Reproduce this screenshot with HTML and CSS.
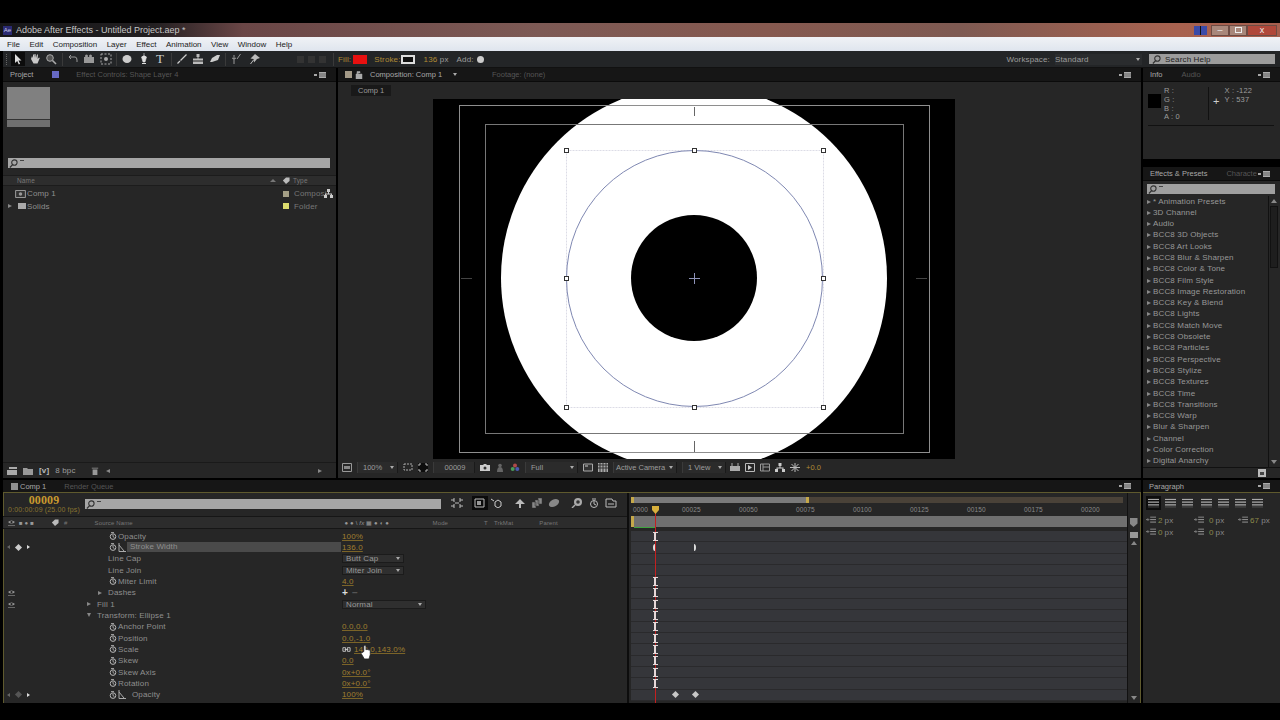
FILE: index.html
```html
<!DOCTYPE html>
<html lang="en">
<head>
  <meta charset="UTF-8">
  <title>Adobe After Effects</title>
  <link rel="stylesheet" href="styles.css">
</head>
<body>
  <!-- shared icons -->
  <svg class="defs">
    <symbol id="i-watch" viewBox="0 0 8 8"><circle cx="4" cy="4.600" r="2.800" fill="none" stroke="#b5b5b5"/><path d="M2 .6h3M4 2.600v2l1.500 1" fill="none" stroke="#b5b5b5" stroke-width=".9"/></symbol>
    <symbol id="i-eye" viewBox="0 0 10 8"><path d="M1 3.500Q5 0 9 3.500 5 7 1 3.500z" fill="#999"/><circle cx="5" cy="3.500" r="1.300" fill="#222"/><path d="M1 7.500h8" stroke="#777"/></symbol>
    <symbol id="i-graph" viewBox="0 0 8 9"><path d="M1 0v8.500h7M1 2l5 6" fill="none" stroke="#aaa"/></symbol>
    <symbol id="i-lens" viewBox="0 0 10 10"><circle cx="6" cy="4" r="3" fill="none" stroke="#333" stroke-width="1.200"/><path d="M4 6.200 1 9.400" stroke="#333" stroke-width="1.400"/></symbol>
    <symbol id="i-menu" viewBox="0 0 12 6"><path d="M0 2.200h3v1.600H0z" fill="#ccc"/><path d="M5 0h7v6H5z" fill="#aaa"/><path d="M5 2h7M5 4h7" stroke="#333" stroke-width=".6"/></symbol>
    <symbol id="i-lines" viewBox="0 0 12 10"><path d="M0 1h12M0 4h12M0 7h12" stroke="#aaa" stroke-width="1.400" fill="none"/><path d="M0 9.500h12" stroke="#666"/></symbol>
    <symbol id="i-indent" viewBox="0 0 12 9"><path d="M5 1h7M5 4h7M5 7h7" stroke="#aaa" fill="none"/><path d="M0 4h3M2 2.500 3.500 4 2 5.500" stroke="#aaa" fill="none" stroke-width=".8"/></symbol>
  </svg>

  <div class="titlebar">
    <span class="app-logo">Ae</span>
    <span class="app-title">Adobe After Effects - Untitled Project.aep *</span>
    <span class="win-flag"></span>
    <span class="win-btn">&#8211;</span>
    <span class="win-btn"><span class="win-max"></span></span>
    <span class="win-btn win-close">x</span>
  </div>

  <nav class="menubar">
    <span>File</span><span>Edit</span><span>Composition</span><span>Layer</span><span>Effect</span>
    <span>Animation</span><span>View</span><span>Window</span><span>Help</span>
  </nav>

  <div class="toolbar">
    <span class="grip"></span>
    <svg class="tool tool-on" viewBox="0 0 12 12"><path d="M3 1v9l2.200-2 1.600 3.400 1.300-.6-1.600-3.200h3z" fill="#ddd"/></svg>
    <svg class="tool" viewBox="0 0 12 12"><path d="M2 6 3 3l1 2V1.500h1V5l.5-4h1L7 5l1-3.400h1L8.600 6 10 4.500l.8.6L8.500 10.500h-4z" fill="#c8c8c8"/></svg>
    <svg class="tool" viewBox="0 0 12 12"><circle cx="5" cy="5" r="3.300" fill="#555" stroke="#aaa"/><path d="m7.500 7.500 3.500 3.500" stroke="#aaa" stroke-width="1.600"/></svg>
    <span class="tb-sep"></span>
    <svg class="tool" viewBox="0 0 12 12"><path d="M2 4h6q2 0 2 3v2" fill="none" stroke="#999"/><path d="M4 2 2 4l2 2" fill="none" stroke="#999"/></svg>
    <svg class="tool" viewBox="0 0 12 12"><path d="M1 4h10v6H1z" fill="#999"/><circle cx="3.500" cy="3" r="1.500" fill="#999"/><circle cx="7.500" cy="3" r="1.500" fill="#999"/></svg>
    <svg class="tool" viewBox="0 0 12 12"><path d="M1 1h10v10H1z" fill="none" stroke="#aaa" stroke-dasharray="2 1.500"/><circle cx="6" cy="6" r="2" fill="#aaa"/></svg>
    <span class="tb-sep"></span>
    <svg class="tool" viewBox="0 0 12 12"><ellipse cx="6" cy="6" rx="4.500" ry="4" fill="#ccc"/></svg>
    <svg class="tool" viewBox="0 0 12 12"><path d="M6 0v3M3.500 4Q6 1.500 8.500 4L7 9H5z" fill="#ddd" stroke="#ddd" stroke-width=".6"/><path d="M4 10.500h4" stroke="#ddd"/></svg>
    <span class="tool-t">T</span>
    <span class="tb-sep"></span>
    <svg class="tool" viewBox="0 0 12 12"><path d="m10.500 1.500-6 6M4 8 1.500 10.500" stroke="#ccc" stroke-width="1.300"/></svg>
    <svg class="tool" viewBox="0 0 12 12"><path d="M4.500 1h3v3h-1v1.500H11V11H1V5.500h4.500V4h-1z" fill="#bbb"/><path d="M1 8h10" stroke="#222"/></svg>
    <svg class="tool" viewBox="0 0 12 12"><path d="M3 5 8 2h3L9 7 3 9H1z" fill="#ccc"/></svg>
    <span class="tb-sep"></span>
    <svg class="tool" viewBox="0 0 12 12"><path d="M4 2v9M2 5l2 1 2-1M10.500 1 7 6" stroke="#999" fill="none"/></svg>
    <svg class="tool tool-pin" viewBox="0 0 12 12"><path d="M6 1 11 5 8 6 5 9.500 4.500 6 1.500 5.500z" fill="#bbb"/><path d="M4.500 7 1.500 11" stroke="#bbb"/></svg>
    <span class="axis"></span><span class="axis"></span><span class="axis"></span>
    <span class="tb-sep tb-sep-axis"></span>
    <span class="gold fill-lbl">Fill:</span><span class="swatch-fill"></span>
    <span class="gold stroke-lbl">Stroke:</span><span class="swatch-stroke"></span>
    <span class="stroke-px"><span class="gold">136</span> px</span>
    <span class="add-lbl">Add:</span><span class="add-dot"></span>
    <span class="workspace-lbl">Workspace:</span>
    <span class="workspace">Standard<span class="arrow"></span></span>
    <span class="help"><svg class="lens" viewBox="0 0 10 10"><use href="#i-lens"/></svg>Search Help</span>
  </div>

  <div class="upper">
    <section class="panel project">
      <div class="tabs">
        <span class="tab tab-on">Project</span>
        <span class="tab-chip"></span>
        <span class="tab tab-dim effect-tab">Effect Controls: Shape Layer 4</span>
        <svg class="panel-menu" viewBox="0 0 12 6"><use href="#i-menu"/></svg>
      </div>
      <div class="thumb"><div class="thumb-strip"></div></div>
      <div class="search project-search"><svg class="lens" viewBox="0 0 10 10"><use href="#i-lens"/></svg><span class="caret"></span></div>
      <div class="col-head">
        <span>Name</span>
        <span class="sort"></span>
        <svg class="tag" viewBox="0 0 9 9"><path d="M1 4 4.500.500H8.500V4.500L4.500 8z" fill="#bbb"/></svg>
        <span>Type</span>
      </div>
      <ul class="files">
        <li><svg class="comp-ico" viewBox="0 0 12 9"><path d="M.5.500h11v8H.500z" fill="#333" stroke="#aaa"/><circle cx="6" cy="4.500" r="2" fill="#999"/></svg><span class="file-name">Comp 1</span><span class="lbl lbl-comp"></span><span class="file-type">Composi</span><svg class="flow" viewBox="0 0 9 9"><path d="M3 0h3v3H3zM0 6h3v3H0zM6 6h3v3H6zM4 3h1v1.500h3V6H7V5.500H2V6H1V4.500h3z" fill="#ccc"/></svg></li>
        <li><span class="tw"></span><span class="folder"></span><span class="file-name">Solids</span><span class="lbl lbl-folder"></span><span class="file-type">Folder</span></li>
      </ul>
      <div class="project-foot">
        <svg class="foot-ico" viewBox="0 0 10 8"><path d="M0 3h10v5H0z" fill="#aaa"/><path d="M2 0h8v2H2z" fill="#aaa"/></svg>
        <svg class="foot-ico" viewBox="0 0 10 8"><path d="M0 1h4l1 1h5v6H0z" fill="#999"/></svg>
        <span class="bracket">[v]</span>
        <span>8 bpc</span>
        <svg class="foot-ico trash" viewBox="0 0 8 10"><path d="M0 1h8v1H0zM1 3h6v7H1z" fill="#999"/></svg>
        <span class="tw tw-left"></span>
        <span class="tw foot-right"></span>
      </div>
    </section>

    <section class="panel comp">
      <div class="tabs">
        <span class="tab-chip tab-chip-tan"></span>
        <svg class="lock" viewBox="0 0 8 9"><path d="M1 4h6v5H1zM2 4V1.500h3V3" fill="#aaa" stroke="#aaa" stroke-width=".5"/></svg>
        <span class="tab tab-on comp-tab">Composition: Comp 1<span class="arrow comp-arrow"></span></span>
        <span class="tab tab-dim footage-tab">Footage: (none)</span>
        <svg class="panel-menu" viewBox="0 0 12 6"><use href="#i-menu"/></svg>
      </div>
      <div class="crumbs"><span class="crumb">Comp 1</span></div>
      <div class="viewer">
        <svg class="stage" viewBox="433 99 522 360">
          <rect x="433" y="99" width="522" height="360" fill="#000"/>
          <circle cx="694" cy="278" r="193" fill="#fff"/>
          <circle cx="694" cy="278" r="63" fill="#000"/>
          <g fill="none" stroke="#8e8e8e">
            <rect x="459.500" y="105.500" width="470" height="347"/>
            <rect x="485.500" y="124.500" width="418" height="309" stroke="#777"/>
            <path d="M694.500 107v9M694.500 441v11" stroke="#666"/>
            <path d="M461 278.500h11M916 278.500h11" stroke="#444"/>
          </g>
          <rect x="566.500" y="150.500" width="257" height="257" fill="none" stroke="#dcdce6" stroke-dasharray="2 1"/>
          <circle cx="694.500" cy="278.500" r="128" fill="none" stroke="#7f88b2"/>
          <g fill="#fff" stroke="#333">
            <rect x="564.500" y="148.500" width="4" height="4"/><rect x="692.500" y="148.500" width="4" height="4"/><rect x="821.500" y="148.500" width="4" height="4"/>
            <rect x="564.500" y="276.500" width="4" height="4"/><rect x="821.500" y="276.500" width="4" height="4"/>
            <rect x="564.500" y="405.500" width="4" height="4"/><rect x="692.500" y="405.500" width="4" height="4"/><rect x="821.500" y="405.500" width="4" height="4"/>
          </g>
          <path d="M689 278.500h11M694.500 273v11" stroke="#8e93b8"/>
        </svg>
      </div>
      <div class="comp-foot">
        <svg class="cf-ico" viewBox="0 0 10 9"><path d="M.5.500h9v8h-9z" fill="none" stroke="#999"/><path d="M2 3h6v3H2z" fill="#888"/></svg>
        <span class="cf-box cf-zoom">100%<span class="arrow"></span></span>
        <svg class="cf-ico" viewBox="0 0 10 9"><path d="M1 1h8v6H1z" fill="none" stroke="#aaa" stroke-dasharray="2 1"/></svg>
        <svg class="cf-ico cf-ico-dark" viewBox="0 0 10 9"><path d="M1 3V1h2M7 1h2v2M9 6v2H7M3 8H1V6" fill="none" stroke="#bbb"/></svg>
        <span class="cf-box cf-time">00009</span>
        <svg class="cf-ico" viewBox="0 0 10 9"><path d="M0 2h3l1-1h2l1 1h3v6H0z" fill="#ccc"/><circle cx="5" cy="5" r="1.500" fill="#333"/></svg>
        <svg class="cf-ico" viewBox="0 0 10 9"><circle cx="5" cy="2.500" r="1.800" fill="#666"/><path d="M2 9q0-5 3-5t3 5z" fill="#666"/></svg>
        <svg class="cf-ico" viewBox="0 0 10 9"><circle cx="5" cy="2.500" r="2" fill="#b04a4a"/><circle cx="2.700" cy="6" r="2" fill="#4a9a5a"/><circle cx="7.300" cy="6" r="2" fill="#4a5ab0"/></svg>
        <span class="cf-box cf-full">Full<span class="arrow"></span></span>
        <svg class="cf-ico" viewBox="0 0 10 9"><path d="M.5 1h9v7h-9z" fill="#333" stroke="#aaa"/><path d="M2 2.500h3v1H2z" fill="#ccc"/></svg>
        <svg class="cf-ico" viewBox="0 0 10 9"><path d="M0 0h10v9H0z" fill="#aaa"/><path d="M0 2h10M0 5h10M2 0v9M5 0v9M8 0v9" stroke="#333"/></svg>
        <span class="cf-box cf-cam">Active Camera<span class="arrow"></span></span>
        <span class="cf-box cf-view">1 View<span class="arrow"></span></span>
        <svg class="cf-ico cf-ico-first" viewBox="0 0 10 9"><path d="M0 3h10v5H0z" fill="#aaa"/><path d="M2 0v3M8 0v3" stroke="#aaa"/></svg>
        <svg class="cf-ico" viewBox="0 0 10 9"><path d="M.5.500h9v8h-9z" fill="none" stroke="#bbb"/><path d="m3 2 4 2.500L3 7z" fill="#ccc"/></svg>
        <svg class="cf-ico" viewBox="0 0 10 9"><path d="M.5 1h9v7h-9zM3 1v7M3 4h6" fill="none" stroke="#999"/></svg>
        <svg class="cf-ico" viewBox="0 0 10 9"><path d="M3.500 0h3v3h-3zM0 6h3v3H0zM7 6h3v3H7zM4.500 3h1v1.500h3V6h-1v-.5h-5V6h-1V4.500h3z" fill="#ccc"/></svg>
        <svg class="cf-ico" viewBox="0 0 10 9"><path d="M5 0v9M0 4.500h10M1.500 1l7 7M8.500 1l-7 7" stroke="#bbb"/></svg>
        <span class="gold cf-exposure">+0.0</span>
      </div>
    </section>

    <aside class="side">
      <section class="panel info">
        <div class="tabs">
          <span class="tab tab-on">Info</span>
          <span class="tab tab-dim audio-tab">Audio</span>
          <svg class="panel-menu" viewBox="0 0 12 6"><use href="#i-menu"/></svg>
        </div>
        <div class="info-body">
          <span class="info-swatch"></span>
          <div class="info-col">R :<br>G :<br>B :<br>A : 0</div>
          <div class="info-cross">+</div>
          <div class="info-xy">X : -122<br>Y : 537</div>
        </div>
      </section>
      <section class="panel effects">
        <div class="tabs">
          <span class="tab tab-on">Effects &amp; Presets</span>
          <span class="tab tab-dim char-tab">Characte</span>
          <svg class="panel-menu" viewBox="0 0 12 6"><use href="#i-menu"/></svg>
        </div>
        <div class="search fx-search"><svg class="lens" viewBox="0 0 10 10"><use href="#i-lens"/></svg><span class="caret"></span></div>
        <div class="fx-body">
          <ul class="fx-list">
            <li><span class="tw"></span>* Animation Presets</li>
            <li><span class="tw"></span>3D Channel</li>
            <li><span class="tw"></span>Audio</li>
            <li><span class="tw"></span>BCC8 3D Objects</li>
            <li><span class="tw"></span>BCC8 Art Looks</li>
            <li><span class="tw"></span>BCC8 Blur &amp; Sharpen</li>
            <li><span class="tw"></span>BCC8 Color &amp; Tone</li>
            <li><span class="tw"></span>BCC8 Film Style</li>
            <li><span class="tw"></span>BCC8 Image Restoration</li>
            <li><span class="tw"></span>BCC8 Key &amp; Blend</li>
            <li><span class="tw"></span>BCC8 Lights</li>
            <li><span class="tw"></span>BCC8 Match Move</li>
            <li><span class="tw"></span>BCC8 Obsolete</li>
            <li><span class="tw"></span>BCC8 Particles</li>
            <li><span class="tw"></span>BCC8 Perspective</li>
            <li><span class="tw"></span>BCC8 Stylize</li>
            <li><span class="tw"></span>BCC8 Textures</li>
            <li><span class="tw"></span>BCC8 Time</li>
            <li><span class="tw"></span>BCC8 Transitions</li>
            <li><span class="tw"></span>BCC8 Warp</li>
            <li><span class="tw"></span>Blur &amp; Sharpen</li>
            <li><span class="tw"></span>Channel</li>
            <li><span class="tw"></span>Color Correction</li>
            <li><span class="tw"></span>Digital Anarchy</li>
          </ul>
          <div class="vscroll"><span class="up"></span><span class="thumb-bar"></span><span class="down"></span></div>
        </div>
        <div class="fx-foot"><svg class="foot-ico" viewBox="0 0 8 8"><path d="M0 0h8v8H0z" fill="#bbb"/><path d="M2 3h4v3H2z" fill="#444"/></svg></div>
      </section>
    </aside>
  </div>

  <div class="lower">
    <section class="panel timeline">
      <div class="tabs tl-tabs">
        <span class="tab-chip tab-chip-gray"></span>
        <span class="tab tab-on">Comp 1</span>
        <span class="tab tab-dim rq-tab">Render Queue</span>
        <svg class="panel-menu" viewBox="0 0 12 6"><use href="#i-menu"/></svg>
      </div>
      <div class="tl-main">
        <div class="tl-left">
          <div class="tl-ctrl">
            <div class="timecode"><div class="tc-big">00009</div><div class="tc-small">0:00:00:09 (25.00 fps)</div></div>
            <div class="search tl-search"><svg class="lens" viewBox="0 0 10 10"><use href="#i-lens"/></svg><span class="caret"></span></div>
            <div class="tl-tools">
              <svg viewBox="0 0 12 10"><path d="M0 2h3M0 8h3M3 0v4M3 6v4M9 0v4M9 6v4M9 2h3M9 8h3M4 5h4" stroke="#bbb" fill="none"/></svg>
              <svg class="tl-tool-on" viewBox="0 0 12 10"><path d="M1 1h9v8H1z" fill="none" stroke="#bbb"/><path d="M3 3h4v4H3z" fill="#999"/></svg>
              <svg viewBox="0 0 12 10"><path d="M4 4l3-2 3 2v4l-3 2-3-2z" fill="none" stroke="#ccc"/><path d="M0 1l3 2" stroke="#ccc"/></svg>
              <svg class="tl-gap" viewBox="0 0 12 10"><path d="M1 6 6 1l5 5zM5 6h2v4H5zM1 8h10" fill="#bbb"/></svg>
              <svg viewBox="0 0 12 10"><path d="M1 4h4v6H1zM4 2h4v6H4zM7 0h4v6H7z" fill="#888" stroke="#333" stroke-width=".5"/></svg>
              <svg viewBox="0 0 12 10"><ellipse cx="6" cy="5" rx="5.500" ry="3.500" transform="rotate(-30 6 5)" fill="#888"/></svg>
              <svg class="tl-gap" viewBox="0 0 12 10"><circle cx="7" cy="4" r="4" fill="#aaa"/><circle cx="7" cy="4" r="1.800" fill="#333"/><path d="M4 7 1 10" stroke="#aaa" stroke-width="1.400"/></svg>
              <svg viewBox="0 0 12 10"><circle cx="6" cy="6" r="3.500" fill="none" stroke="#bbb"/><path d="M4 1h4M6 3v3l2 1" stroke="#bbb" fill="none"/></svg>
              <svg viewBox="0 0 12 10"><path d="M1 1h6l1 2h3v6H1z" fill="none" stroke="#bbb"/><path d="M3 6h6" stroke="#bbb"/></svg>
            </div>
          </div>
          <div class="tl-head">
            <span class="sw-ico"><svg viewBox="0 0 10 8"><use href="#i-eye"/></svg></span>
            <span class="head-sw">&#9632;&#9679;&#9632;</span>
            <svg class="tag" viewBox="0 0 9 9"><path d="M1 4 4.500.500H8.500V4.500L4.500 8z" fill="#bbb"/></svg>
            <span class="hash">#</span>
            <span class="src">Source Name</span>
            <span class="layer-sw">&#9679; &#9679; &#92; <i>fx</i> &#9638; &#9679; &#9680; &#9679;</span>
            <span class="h-mode">Mode</span><span class="h-t">T</span><span class="h-trk">TrkMat</span><span class="h-parent">Parent</span>
          </div>
          <div class="tl-rows">
            <div class="row"><span class="sw"></span><span class="nm nm-prop"><svg class="watch"><use href="#i-watch"/></svg>Opacity</span><span class="val"><u>100%</u></span></div>
            <div class="row"><span class="sw"><span class="nav"><b class="nl"></b><b class="nd"></b><b class="nr"></b></span></span><span class="nm nm-prop nm-sel"><svg class="watch"><use href="#i-watch"/></svg><svg class="graph"><use href="#i-graph"/></svg><span class="sel">Stroke Width</span></span><span class="val"><u>136.0</u></span></div>
            <div class="row"><span class="sw"></span><span class="nm nm-plain">Line Cap</span><span class="val"><span class="dd dd-s">Butt Cap<span class="arrow"></span></span></span></div>
            <div class="row"><span class="sw"></span><span class="nm nm-plain">Line Join</span><span class="val"><span class="dd dd-s">Miter Join<span class="arrow"></span></span></span></div>
            <div class="row"><span class="sw"></span><span class="nm nm-prop"><svg class="watch"><use href="#i-watch"/></svg>Miter Limit</span><span class="val"><u>4.0</u></span></div>
            <div class="row"><span class="sw"><svg class="eye"><use href="#i-eye"/></svg></span><span class="nm nm-group"><span class="tw"></span>Dashes</span><span class="val val-plus">+ <em>&#8211;</em></span></div>
            <div class="row"><span class="sw"><svg class="eye"><use href="#i-eye"/></svg></span><span class="nm"><span class="tw"></span>Fill 1</span><span class="val"><span class="dd dd-l">Normal<span class="arrow"></span></span></span></div>
            <div class="row"><span class="sw"></span><span class="nm"><span class="tw tw-down"></span>Transform: Ellipse 1</span><span class="val"></span></div>
            <div class="row"><span class="sw"></span><span class="nm nm-prop"><svg class="watch"><use href="#i-watch"/></svg>Anchor Point</span><span class="val"><u>0.0,0.0</u></span></div>
            <div class="row"><span class="sw"></span><span class="nm nm-prop"><svg class="watch"><use href="#i-watch"/></svg>Position</span><span class="val"><u>0.0,-1.0</u></span></div>
            <div class="row"><span class="sw"></span><span class="nm nm-prop"><svg class="watch"><use href="#i-watch"/></svg>Scale</span><span class="val"><svg class="chain" viewBox="0 0 10 5"><path d="M1 .5h3v4H1zM6 .5h3v4H6zM3 2.500h4" fill="none" stroke="#ccc"/></svg><u class="scale-val">143.0,143.0%</u></span></div>
            <div class="row"><span class="sw"></span><span class="nm nm-prop"><svg class="watch"><use href="#i-watch"/></svg>Skew</span><span class="val"><u>0.0</u></span></div>
            <div class="row"><span class="sw"></span><span class="nm nm-prop"><svg class="watch"><use href="#i-watch"/></svg>Skew Axis</span><span class="val"><u>0x+0.0&deg;</u></span></div>
            <div class="row"><span class="sw"></span><span class="nm nm-prop"><svg class="watch"><use href="#i-watch"/></svg>Rotation</span><span class="val"><u>0x+0.0&deg;</u></span></div>
            <div class="row"><span class="sw"><span class="nav"><b class="nl"></b><b class="nd nd-dim"></b><b class="nr"></b></span></span><span class="nm nm-prop nm-sel"><svg class="watch"><use href="#i-watch"/></svg><svg class="graph"><use href="#i-graph"/></svg><span class="sel sel-none">Opacity</span></span><span class="val"><u>100%</u></span></div>
          </div>
        </div>

        <div class="tl-right">
          <div class="work-area"><span class="work-on"></span></div>
          <div class="ruler">
            <span class="r0">0000</span>
            <span>00025</span><span>00050</span><span>00075</span><span>00100</span><span>00125</span><span>00150</span><span>00175</span><span>00200</span>
          </div>
          <div class="time-bar"><span class="green"></span></div>
          <div class="tracks">
            <div class="track"><i class="ibeam"></i></div>
            <div class="track"><span class="kf-half"></span><span class="kf-right"></span></div>
            <div class="track"></div>
            <div class="track"></div>
            <div class="track"><i class="ibeam"></i></div>
            <div class="track"><i class="ibeam"></i></div>
            <div class="track"><i class="ibeam"></i></div>
            <div class="track"><i class="ibeam"></i></div>
            <div class="track"><i class="ibeam"></i></div>
            <div class="track"><i class="ibeam"></i></div>
            <div class="track"><i class="ibeam"></i></div>
            <div class="track"><i class="ibeam"></i></div>
            <div class="track"><i class="ibeam"></i></div>
            <div class="track"><i class="ibeam"></i></div>
            <div class="track"><span class="kf kf-a"></span><span class="kf kf-b"></span></div>
          </div>
          <span class="playhead"></span>
          <span class="head-cap"></span>
        </div>

        <div class="tl-scroll">
          <span class="shield"></span>
          <span class="lock-mini"></span>
          <span class="up"></span>
          <span class="tl-scroll-fill"></span>
          <span class="down"></span>
        </div>
      </div>
      <svg class="hand" viewBox="0 0 12 15"><path d="M3.500 7V2q1-1.500 2 0v3.500l1-.5 1 .5 1 0 1 .8V10l-1.200 4H4L1 9q0-1.500 1.200-1z" fill="#fff" stroke="#222" stroke-width=".7"/></svg>
    </section>

    <section class="panel paragraph">
      <div class="tabs tl-tabs">
        <span class="tab tab-on">Paragraph</span>
        <svg class="panel-menu" viewBox="0 0 12 6"><use href="#i-menu"/></svg>
      </div>
      <div class="align">
        <svg class="al-on" viewBox="0 0 12 10"><use href="#i-lines"/></svg>
        <svg viewBox="0 0 12 10"><use href="#i-lines"/></svg>
        <svg viewBox="0 0 12 10"><use href="#i-lines"/></svg>
        <svg class="al-gap" viewBox="0 0 12 10"><use href="#i-lines"/></svg>
        <svg viewBox="0 0 12 10"><use href="#i-lines"/></svg>
        <svg viewBox="0 0 12 10"><use href="#i-lines"/></svg>
        <svg viewBox="0 0 12 10"><use href="#i-lines"/></svg>
      </div>
      <div class="indents">
        <span><svg viewBox="0 0 12 9"><use href="#i-indent"/></svg><em>2</em> px</span>
        <span class="ind-mid"><svg viewBox="0 0 12 9"><use href="#i-indent"/></svg><em>0</em> px</span>
        <span><svg viewBox="0 0 12 9"><use href="#i-indent"/></svg><em>67</em> px</span>
        <span><svg viewBox="0 0 12 9"><use href="#i-indent"/></svg><em>0</em> px</span>
        <span class="ind-mid"><svg viewBox="0 0 12 9"><use href="#i-indent"/></svg><em>0</em> px</span>
      </div>
    </section>
  </div>
</body>
</html>
```

FILE: styles.css
```css
* {
  box-sizing: border-box;
}
html, body {
  margin: 0;
  height: 720px;
  overflow: hidden;
  background: #000;
}
body {
  padding-top: 23px;
  font-family: "Liberation Sans", "Open Sans", sans-serif;
  font-size: 8px;
  letter-spacing: .15px;
  color: #9d9d9d;
}
ul {
  list-style: none;
  margin: 0;
  padding: 0;
}
.defs {
  display: none;
}
.gold {
  color: #b08a35;
}

/* window chrome */
.titlebar {
  height: 14px;
  display: flex;
  align-items: center;
  padding-left: 3px;
  color: #c6c6c6;
  font-size: 9px;
  letter-spacing: 0;
  background: linear-gradient(90deg, #161618 0, #221f21 12%, #6a4646 19%, #7d5a55 42%, #86594f 60%, #7e5a52 75%, #a8624f 92%, #a65f4e 100%);
}
.app-logo {
  width: 9px;
  height: 9px;
  margin-right: 4px;
  background: #2b2b73;
  color: #cfcfe8;
  font-size: 6px;
  line-height: 9px;
  text-align: center;
}
.app-title {
  flex: 1;
}
.win-flag {
  width: 13px;
  height: 9px;
  margin-right: 4px;
  background: linear-gradient(90deg, #3a4aa8 45%, #111 45%, #111 55%, #3a4aa8 55%);
}
.win-btn {
  width: 18px;
  height: 11px;
  display: flex;
  align-items: center;
  justify-content: center;
  background: #a8877a;
  border: 1px solid #6d4c44;
  color: #eee;
}
.win-max {
  width: 7px;
  height: 6px;
  border: 1px solid #eee;
}
.win-close {
  width: 30px;
  margin-right: 3px;
  background: #b0483a;
}
.menubar {
  height: 14px;
  display: flex;
  align-items: center;
  gap: 9.500px;
  padding-left: 7px;
  background: linear-gradient(#f0f2f6, #dfe5ee);
  color: #222;
  font-size: 8px;
  letter-spacing: 0;
}
.toolbar {
  height: 17px;
  display: flex;
  align-items: center;
  margin-left: 3px;
  background: #232527;
  border-bottom: 1px solid #111;
}
.grip {
  width: 2px;
  height: 11px;
  margin: 0 4px 0 3px;
  border-left: 1px dotted #666;
}
.tool {
  width: 12px;
  height: 12px;
  margin-right: 4.500px;
}
.tool-on {
  background: #0c0c0c;
  outline: 1px solid #0c0c0c;
}
.tool-t {
  width: 12px;
  margin-right: 4.500px;
  color: #ccc;
  font: 13px/12px "Liberation Serif", serif;
  text-align: center;
}
.tool-pin {
  margin-left: 2px;
}
.tb-sep {
  width: 1px;
  height: 13px;
  margin: 0 4px 0 0;
  background: #3a3a3a;
}
.axis {
  width: 7px;
  height: 7px;
  margin-right: 4px;
  background: #333;
}
.tool-pin + .axis {
  margin-left: 32px;
}
.tb-sep-axis {
  margin-left: 3px;
}
.fill-lbl {
  margin-left: 0;
}
.swatch-fill {
  width: 14px;
  height: 9px;
  margin-left: 2px;
  background: #e81010;
}
.stroke-lbl {
  margin-left: 7px;
}
.swatch-stroke {
  width: 14px;
  height: 9px;
  background: #111;
  border: 2px solid #ddd;
}
.stroke-px {
  margin-left: 9px;
}
.add-lbl {
  margin-left: 8px;
}
.add-dot {
  width: 7px;
  height: 7px;
  margin-left: 3px;
  border-radius: 50%;
  background: #ccc;
}
.workspace-lbl {
  margin-left: auto;
  margin-right: 5px;
}
.workspace {
  width: 87px;
  height: 11px;
  display: flex;
  align-items: center;
  justify-content: space-between;
  padding-right: 2px;
  background: #2a2c2e;
}
.help {
  width: 126px;
  height: 10px;
  margin: 0 5px 0 7px;
  display: flex;
  align-items: center;
  padding-left: 2px;
  background: #9c9c9c;
  color: #222;
}
.arrow {
  display: inline-block;
  width: 0;
  height: 0;
  border: 2.500px solid transparent;
  border-top: 3px solid #aaa;
  border-bottom: 0;
}
.lens {
  width: 9px;
  height: 9px;
  margin: 0 4px 0 1px;
  flex: none;
}

/* panels */
.upper {
  height: 410px;
  display: flex;
  gap: 2px;
  padding-left: 3px;
}
.panel {
  background: #262626;
  display: flex;
  flex-direction: column;
  position: relative;
}
.tabs {
  height: 14px;
  flex: none;
  display: flex;
  align-items: center;
  background: #161616;
  border-bottom: 1px solid #0b0b0b;
  padding-left: 7px;
  white-space: nowrap;
}
.tab {
  color: #a8a8a8;
  font-size: 7.500px;
  letter-spacing: 0;
}
.tab-dim {
  color: #555;
}
.tab-chip {
  width: 7px;
  height: 7px;
  margin-left: 19px;
  background: #6669c4;
}
.effect-tab {
  margin-left: 17px;
}
.panel-menu {
  width: 12px;
  height: 6px;
  margin-left: auto;
  margin-right: 10px;
}
.project {
  width: 333px;
}
.thumb {
  width: 43px;
  height: 40px;
  margin: 5px 0 0 4px;
  background: #808080;
  display: flex;
  align-items: flex-end;
}
.thumb-strip {
  width: 100%;
  height: 8px;
  background: #6f6f6f;
  border-top: 1px solid #333;
}
.search {
  display: flex;
  align-items: center;
  background: #a6a6a6;
  height: 10px;
}
.caret {
  width: 4px;
  height: 1px;
  margin-left: -2px;
  margin-bottom: 5px;
  background: #444;
}
.project-search {
  width: 322px;
  margin: 31px 0 0 5px;
}
.col-head {
  height: 11px;
  margin-top: 7px;
  padding-left: 14px;
  display: flex;
  align-items: center;
  background: #2d2d2d;
  border-top: 1px solid #1c1c1c;
  border-bottom: 1px solid #1c1c1c;
  font-size: 6.500px;
  color: #777;
}
.sort {
  margin-left: 235px;
  width: 0;
  height: 0;
  border: 3px solid transparent;
  border-bottom: 3px solid #777;
  border-top: 0;
}
.tag {
  width: 8px;
  height: 8px;
  margin: 0 3px 0 6px;
}
.files {
  flex: 1;
  padding-top: 1.500px;
}
.files li {
  height: 12.500px;
  display: flex;
  align-items: center;
  padding-left: 5px;
}
.comp-ico {
  width: 11px;
  height: 8px;
  margin-left: 7px;
  margin-right: 1px;
}
.file-name {
  width: 256px;
  color: #8f8f8f;
}
.tw {
  display: inline-block;
  width: 0;
  height: 0;
  margin-right: 3px;
  border: 2.500px solid transparent;
  border-left: 4px solid #888;
  border-right: 0;
}
.tw-down {
  border: 2.500px solid transparent;
  border-top: 4px solid #888;
  border-bottom: 0;
}
.tw-left {
  border-left: 0;
  border-right: 4px solid #888;
}
.folder {
  width: 8px;
  height: 6px;
  margin: 0 1px 0 3px;
  background: #aaa;
}
.lbl {
  width: 6px;
  height: 6px;
  margin-right: 5px;
}
.lbl-comp {
  background: #a49f86;
}
.lbl-folder {
  background: #dcdc6e;
}
.file-type {
  width: 30px;
  color: #777;
  white-space: nowrap;
}
.flow {
  width: 9px;
  height: 9px;
}
.project-foot {
  height: 16px;
  display: flex;
  align-items: center;
  padding-left: 4px;
  gap: 6px;
  background: #262626;
  border-top: 1px solid #1a1a1a;
}
.foot-ico {
  width: 10px;
  height: 8px;
}
.bracket {
  color: #bbb;
  font-weight: 700;
}
.trash {
  margin-left: 8px;
}
.foot-right {
  margin-left: auto;
  margin-right: 14px;
}

/* composition viewer */
.comp {
  width: 803px;
}
.tab-chip-tan {
  margin-left: 0;
  background: #a49a88;
}
.lock {
  width: 8px;
  height: 9px;
  margin-left: 3px;
}
.comp-tab {
  margin-left: 7px;
  width: 107px;
  display: flex;
  justify-content: space-between;
  align-items: center;
  padding-right: 20px;
}
.footage-tab {
  margin-left: 15px;
}
.crumbs {
  height: 17px;
  flex: none;
  padding: 3px 0 0 13px;
}
.crumb {
  display: inline-block;
  height: 11px;
  line-height: 11px;
  padding: 0 7px;
  background: #191919;
  color: #999;
  font-size: 7.500px;
  letter-spacing: 0;
}
.viewer {
  height: 360px;
  flex: none;
  padding-left: 95px;
}
.stage {
  display: block;
  width: 522px;
  height: 360px;
}
.comp-foot {
  height: 16px;
  display: flex;
  align-items: center;
  gap: 5px;
  padding-left: 4px;
  white-space: nowrap;
  font-size: 7.500px;
  letter-spacing: 0;
}
.cf-ico {
  width: 10px;
  height: 9px;
}
.cf-ico-dark {
  background: #0d0d0d;
}
.cf-ico-first {
  margin-left: -1px;
}
.cf-box {
  height: 11px;
  display: flex;
  align-items: center;
  justify-content: space-between;
  padding: 0 3px 0 5px;
  background: #2b2b2b;
  border-left: 1px solid #3a3a3a;
  border-right: 1px solid #1a1a1a;
}
.cf-zoom {
  width: 41px;
}
.cf-time {
  width: 42px;
  justify-content: center;
}
.cf-full {
  width: 53px;
}
.cf-cam {
  width: 64px;
  padding-left: 2px;
}
.cf-view {
  width: 44px;
}
.cf-exposure {
  margin-left: 1px;
}

/* right column */
.side {
  width: 137px;
  display: flex;
  flex-direction: column;
}
.info {
  height: 91px;
  flex: none;
}
.audio-tab {
  margin-left: 19px;
}
.info-body {
  display: flex;
  margin: 5px 6px 0 5px;
  height: 39px;
  border-bottom: 1px solid #111;
  line-height: 8.800px;
  font-size: 7.500px;
}
.info-swatch {
  width: 13px;
  height: 14px;
  margin-top: 7px;
  background: #000;
}
.info-col {
  width: 45px;
  margin-left: 3px;
  border-right: 1px solid #111;
  height: 33px;
}
.info-cross {
  margin: 10px 4px 0 4px;
  color: #ccc;
  font-size: 11px;
}
.info-xy {
  white-space: nowrap;
  margin-left: 1px;
}
.effects {
  height: 311px;
  margin-top: 8px;
  flex: none;
}
.char-tab {
  margin-left: 19px;
}
.fx-search {
  width: 128px;
  margin: 3px 0 0 4px;
  flex: none;
  background: #9f9f9f;
}
.fx-body {
  flex: 1;
  display: flex;
  min-height: 0;
  padding-top: 1.500px;
  overflow: hidden;
}
.fx-list {
  flex: 1;
  padding-left: 4px;
}
.fx-list .tw {
  margin-right: 2px;
}
.fx-list li {
  height: 11.300px;
  line-height: 11.300px;
  color: #989898;
  white-space: nowrap;
}
.vscroll {
  width: 10px;
  margin-right: 2px;
  display: flex;
  flex-direction: column;
  align-items: center;
  border-left: 1px solid #111;
}
.up, .down {
  display: block;
  width: 0;
  height: 0;
  margin: 3px 0;
  border: 3px solid transparent;
  border-bottom: 4px solid #888;
  border-top: 0;
}
.down {
  margin-top: auto;
  border-bottom: 0;
  border-top: 4px solid #888;
}
.thumb-bar {
  width: 8px;
  height: 62px;
  background: #1e1e1e;
  border: 1px solid #111;
}
.fx-foot {
  height: 11px;
  flex: none;
  padding-left: 115px;
  border-top: 1px solid #111;
}
.fx-foot .foot-ico {
  display: block;
  width: 8px;
  margin-top: 1px;
}

/* timeline */
.lower {
  height: 223px;
  margin-top: 2px;
  display: flex;
  gap: 2px;
  padding-left: 3px;
}
.timeline {
  width: 1138px;
}
.tl-tabs {
  height: 13px;
  border-bottom: 1px solid #5f5a2e;
  padding-left: 6px;
}
.tab-chip-gray {
  margin: 0 2px 0 2px;
  background: #909090;
}
.rq-tab {
  margin-left: 18px;
}
.tl-main {
  flex: 1;
  display: flex;
  box-shadow: inset 1px 0 #5f5a2e, inset -1px 0 #5f5a2e;
}
.tl-left {
  width: 626px;
  border-right: 2px solid #0d0d0d;
}
.tl-ctrl {
  height: 23px;
  display: flex;
  align-items: flex-start;
}
.timecode {
  width: 82px;
  padding: 1px 0 0 0;
  text-align: center;
  flex: none;
}
.tc-big {
  color: #c89a2f;
  font: 700 12px/12px "Liberation Serif", serif;
}
.tc-small {
  color: #8a7430;
  font-size: 7px;
  line-height: 7px;
  white-space: nowrap;
}
.tl-search {
  width: 356px;
  margin-top: 6px;
  flex: none;
}
.tl-tools {
  display: flex;
  align-items: center;
  gap: 5px;
  margin: 5px 0 0 10px;
}
.tl-tools svg {
  width: 12px;
  height: 10px;
}
.tl-tools .tl-gap {
  margin-left: 6px;
}
.tl-tools .tl-tool-on {
  background: #0b0b0b;
  outline: 2px solid #0b0b0b;
  margin-left: 6px;
}
.tl-head {
  height: 13px;
  display: flex;
  align-items: center;
  padding-left: 4px;
  background: #2c2c2c;
  border-top: 1px solid #161616;
  border-bottom: 1px solid #161616;
  font-size: 6px;
  color: #777;
  white-space: nowrap;
}
.sw-ico svg {
  display: block;
  width: 9px;
  height: 7px;
}
.head-sw {
  width: 26px;
  margin-left: 3px;
  color: #999;
  letter-spacing: 2px;
}
.hash {
  margin-left: 2px;
}
.src {
  width: 250px;
  margin-left: 27px;
}
.layer-sw {
  width: 85px;
  color: #999;
}
.h-t {
  margin-left: 36px;
}
.h-mode {
  margin-left: 3px;
}
.h-trk {
  margin-left: 6px;
}
.h-parent {
  margin-left: 26px;
}
.tl-rows {
  padding-top: 1.500px;
}
.row {
  height: 11.330px;
  display: flex;
  align-items: center;
  color: #8f8f8f;
  white-space: nowrap;
}
.sw {
  width: 84px;
  flex: none;
  display: flex;
  align-items: center;
  padding-left: 4px;
}
.eye {
  width: 9px;
  height: 7px;
}
.nav {
  display: flex;
  align-items: center;
  gap: 6px;
}
.nl, .nr {
  width: 0;
  height: 0;
  border: 2.500px solid transparent;
}
.nl {
  border-right: 3px solid #666;
  border-left: 0;
}
.nr {
  border-left: 3px solid #ddd;
  border-right: 0;
}
.nd {
  width: 5px;
  height: 5px;
  background: #ccc;
  transform: rotate(45deg);
}
.nd-dim {
  background: #555;
}
.nm {
  width: 254px;
  flex: none;
  display: flex;
  align-items: center;
}
.nm .tw {
  margin-right: 6px;
}
.nm-group {
  padding-left: 11px;
}
.nm-plain {
  padding-left: 21px;
}
.nm-prop {
  padding-left: 22px;
}
.watch {
  width: 8px;
  height: 8px;
  margin-right: 1px;
  flex: none;
}
.graph {
  width: 8px;
  height: 9px;
  flex: none;
  margin-right: 1px;
}
.sel {
  flex: 1;
  height: 10px;
  line-height: 10px;
  padding-left: 3px;
  background: #4a4a4a;
}
.sel-none {
  background: none;
  padding-left: 5px;
}
.val {
  display: flex;
  align-items: center;
  margin-left: 1px;
  color: #a07f30;
}
.val u {
  text-decoration-color: #7b6428;
}
.val-plus {
  color: #ddd;
  font-weight: 700;
  font-size: 10px;
}
.val-plus em {
  margin-left: 4px;
  color: #555;
}
.dd {
  height: 9px;
  display: flex;
  align-items: center;
  justify-content: space-between;
  padding: 0 3px;
  background: #2f2f2f;
  border: 1px solid #1b1b1b;
  color: #999;
}
.dd-s {
  width: 62px;
}
.dd-l {
  width: 84px;
}
.chain {
  width: 9px;
  height: 5px;
  margin-right: 3px;
}
.tl-right {
  width: 496px;
  position: relative;
  margin-left: 2px;
  background: #262626;
}
.work-area {
  height: 6px;
  margin-top: 4px;
  background: #4a4238;
  margin-right: 4px;
}
.work-on {
  display: block;
  width: 178px;
  height: 6px;
  background: #7a7a7a;
  border-left: 3px solid #c4a84a;
  border-right: 3px solid #c4a84a;
}
.ruler {
  height: 13px;
  display: flex;
  align-items: center;
  color: #8a8a8a;
  font-size: 6.500px;
  padding-left: 51px;
}
.ruler span {
  width: 57px;
  flex: none;
}
.ruler .r0 {
  width: 0;
  transform: translateX(-49px);
}
.time-bar {
  height: 11px;
  background: #6f6f6f;
  border-left: 3px solid #c4a84a;
  position: relative;
}
.green {
  position: absolute;
  left: 0;
  bottom: -1px;
  width: 21px;
  height: 1px;
  background: #3da43d;
}
.tracks {
  margin-top: 4px;
  background: #35363a;
}
.track {
  height: 11.330px;
  display: flex;
  align-items: center;
  padding-left: 22px;
  border-bottom: 1px solid #2a2a2c;
}
.ibeam {
  position: relative;
  z-index: 2;
  width: 5px;
  height: 9px;
  border-top: 1px solid #e6d8d8;
  border-bottom: 1px solid #e6d8d8;
  background: linear-gradient(90deg, transparent 30%, #e6d8d8 30%, #e6d8d8 70%, transparent 70%);
}
.kf-half {
  position: relative;
  z-index: 2;
  width: 4px;
  height: 7px;
  border-left: 2px solid #ddd;
  border-radius: 50% 0 0 50%;
}
.kf-right {
  width: 4px;
  height: 7px;
  margin-left: 35px;
  border-right: 2px solid #ddd;
  border-radius: 0 50% 50% 0;
}
.kf {
  width: 5px;
  height: 5px;
  background: #c8c8c8;
  transform: rotate(45deg);
}
.kf-a {
  margin-left: 20px;
}
.kf-b {
  margin-left: 15px;
}
.playhead {
  position: absolute;
  z-index: 1;
  top: 14px;
  left: 24px;
  bottom: 0;
  width: 1px;
  background: #c42020;
}
.head-cap {
  position: absolute;
  z-index: 1;
  top: 13px;
  left: 21px;
  width: 7px;
  height: 8px;
  background: #d8b03c;
  clip-path: polygon(0 0, 100% 0, 100% 50%, 50% 100%, 0 50%);
}
.tl-scroll {
  width: 12px;
  display: flex;
  flex-direction: column;
  align-items: center;
  border-left: 1px solid #111;
  padding-top: 25px;
}
.shield {
  width: 8px;
  height: 9px;
  background: #888;
  clip-path: polygon(0 0, 100% 0, 100% 60%, 50% 100%, 0 60%);
}
.lock-mini {
  width: 8px;
  height: 6px;
  margin-top: 5px;
  background: #999;
}
.tl-scroll-fill {
  flex: 1;
}
.hand {
  position: absolute;
  z-index: 3;
  left: 357px;
  top: 164px;
  width: 13px;
  height: 16px;
}

/* paragraph */
.paragraph {
  width: 137px;
}
.align {
  display: flex;
  gap: 6px;
  padding: 5px 0 0 5px;
}
.align svg {
  width: 11px;
  height: 10px;
}
.al-on {
  background: #0d0d0d;
  outline: 2px solid #0d0d0d;
}
.align .al-gap {
  margin-left: 2px;
}
.indents {
  display: grid;
  grid-template-columns: 48px 44px 45px;
  grid-auto-rows: 12px;
  padding: 6px 0 0 3px;
  color: #888;
}
.indents span {
  display: flex;
  align-items: center;
  white-space: nowrap;
}
.indents svg {
  width: 10px;
  height: 8px;
  margin-right: 2px;
}
.indents .ind-mid svg {
  margin-right: 5px;
}
.indents em {
  margin-right: 2px;
  color: #8d8a4a;
  font-style: normal;
}
```
